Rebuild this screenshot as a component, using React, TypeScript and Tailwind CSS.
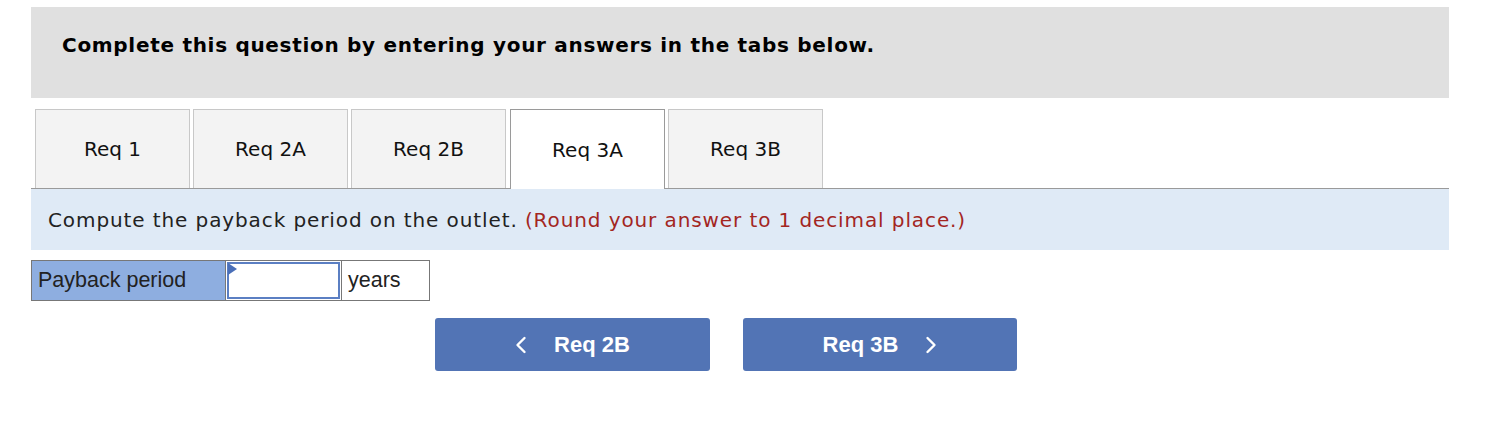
import React from 'react';

const tabs = ['Req 1', 'Req 2A', 'Req 2B', 'Req 3A', 'Req 3B'];
const activeTab = 'Req 3A';

function Chevron({ dir }: { dir: 'left' | 'right' }) {
  return (
    <svg width="12" height="18" viewBox="0 0 12 18" fill="none">
      <polyline
        points={dir === 'left' ? '9.5,2 2.5,9 9.5,16' : '2.5,2 9.5,9 2.5,16'}
        stroke="white"
        strokeWidth="2.4"
        strokeLinecap="round"
        strokeLinejoin="round"
      />
    </svg>
  );
}

export default function App() {
  return (
    <div className="bg-white w-[1495px] h-[435px] pt-[7px] font-['DejaVu_Sans',Verdana,sans-serif]">
      <div className="ml-[31px] w-[1418px]">
        {/* Header */}
        <div className="h-[91px] bg-[#e0e0e0] pl-[31px] pt-[26px]">
          <h1 className="text-[20px] leading-[24px] font-bold text-black tracking-[0.7px]">
            Complete this question by entering your answers in the tabs below.
          </h1>
        </div>

        {/* Tabs */}
        <div className="mt-[11px] flex items-end pl-[4px] border-b border-[#9a9a9a] h-[80px]">
          {tabs.map((t, i) => {
            const active = t === activeTab;
            return (
              <div
                key={t}
                className={
                  active
                    ? 'ml-[4px] w-[155px] h-[80px] -mb-px bg-white border border-b-0 border-[#9a9a9a] flex items-center justify-center text-[20px] text-[#111]'
                    : `${i === 0 ? '' : 'ml-[3px]'} w-[155px] h-[79px] bg-[#f3f3f3] border border-b-0 border-[#c8c8c8] flex items-center justify-center text-[20px] text-[#111]`
                }
              >
                <span className={active ? 'mt-[1px]' : ''}>{t}</span>
              </div>
            );
          })}
        </div>

        {/* Instruction */}
        <div className="h-[61px] bg-[#dfeaf6] flex items-center pl-[17px] text-[20px] tracking-[0.9px] text-[#222]">
          <span>
            Compute the payback period on the outlet.{' '}
            <span className="text-[#a3261f]">(Round your answer to 1 decimal place.)</span>
          </span>
        </div>

        {/* Answer table */}
        <div className="mt-[10px] flex w-[399px] h-[41px] font-['Liberation_Sans',Arial,sans-serif] text-[21.5px]">
          <div className="w-[194px] bg-[#8eaee0] border border-[#777] border-r-0 flex items-center pl-[6px] text-[#222]">
            Payback period
          </div>
          <div className="relative w-[117px] border border-[#777] bg-white p-[1px]">
            <div className="w-full h-full border-2 border-[#5b7fc3]" />
            <div className="absolute left-[2px] top-[2px] w-0 h-0 border-t-[6px] border-b-[6px] border-l-[9px] border-t-transparent border-b-transparent border-l-[#4a6fb8]" />
          </div>
          <div className="w-[88px] border border-l-0 border-[#777] flex items-center pl-[6px] text-[#222]">
            years
          </div>
        </div>

        {/* Nav buttons */}
        <div className="mt-[17px] ml-[404px] flex gap-[33px] font-['Liberation_Sans',Arial,sans-serif]">
          <button className="w-[275px] h-[53px] rounded-[3px] bg-[#5274b5] text-white text-[22px] font-bold flex items-center justify-center gap-[27px]">
            <Chevron dir="left" />
            <span>Req 2B</span>
          </button>
          <button className="w-[274px] h-[53px] rounded-[3px] bg-[#5274b5] text-white text-[22px] font-bold flex items-center justify-center gap-[27px]">
            <span>Req 3B</span>
            <Chevron dir="right" />
          </button>
        </div>
      </div>
    </div>
  );
}
